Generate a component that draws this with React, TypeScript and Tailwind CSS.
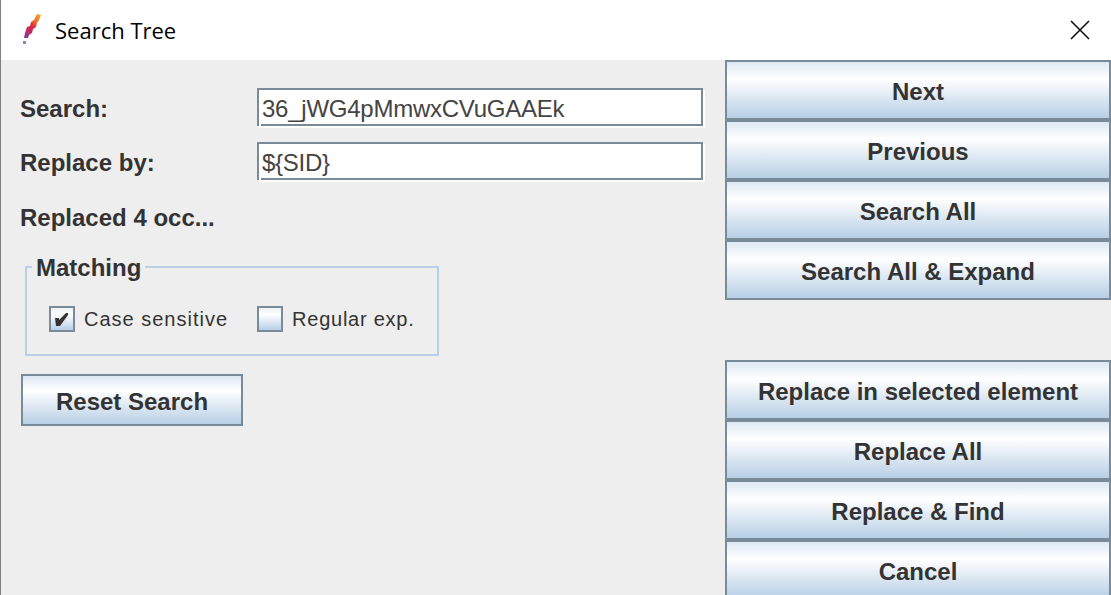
const FONT = "font-['Liberation_Sans',Arial,sans-serif]";

function FeatherIcon() {
  return (
    <svg width="22" height="32" viewBox="0 0 22 32" className="shrink-0">
      <defs>
        <linearGradient id="feather" x1="0.8" y1="0" x2="0.2" y2="1">
          <stop offset="0" stopColor="#f5a02a" />
          <stop offset="0.3" stopColor="#ee6a2c" />
          <stop offset="0.5" stopColor="#dc2b42" />
          <stop offset="0.72" stopColor="#c42a5c" />
          <stop offset="1" stopColor="#8c3a96" />
        </linearGradient>
      </defs>
      <path d="M15 0 L19 1 L17 6 L15 9 L14 13 L11 15 L10 19 L7 21 L6 24 L2 24 L3 19 L5 13 L8 12 L9 8 L12 6 Z" fill="url(#feather)" />
      <rect x="1" y="27" width="3" height="3" fill="#a678c0" />
    </svg>
  );
}

function MetalButton({ label, className = "" }: { label: string; className?: string }) {
  return (
    <button
      className={`flex items-center justify-center border-2 border-[#7a8a99] bg-gradient-to-b from-[#dde8f3] via-white via-30% to-[#b8cfe5] pt-[4px] text-[24px] font-bold text-[#333333] ${className}`}
    >
      {label}
    </button>
  );
}

function Field({ label, value }: { label: string; value: string }) {
  return (
    <div className="flex h-[38px] items-center">
      <span className="w-[237px] pt-[3px] text-[24px] font-bold text-[#333333]">{label}</span>
      <div className="relative flex h-[38px] w-[446px] items-center border-2 border-[#7a8a99] bg-white pl-[3px] pt-[3px] text-[24px] tracking-[-0.25px] text-[#444444] shadow-[2px_2px_0_#ffffff]">
        {value}
        <span className="absolute -bottom-[2px] left-0 h-[2px] w-[2px] bg-white" />
      </div>
    </div>
  );
}

function Check({ label, checked, textClass }: { label: string; checked?: boolean; textClass: string }) {
  return (
    <div className="flex items-center gap-[9px]">
      <span className="flex h-[26px] w-[26px] items-center justify-center border-2 border-[#7a8a99] bg-gradient-to-b from-[#eef3f8] via-white via-30% to-[#b8cfe5]">
        {checked && (
          <svg width="16" height="16" viewBox="0 0 16 16">
            <path d="M1 7 H5 V9 L12 2 H14 V4 L6 15 H2 Z" fill="#333333" />
          </svg>
        )}
      </span>
      <span className={`text-[20px] text-[#333333] ${textClass}`}>{label}</span>
    </div>
  );
}

export default function App() {
  const searchButtons = ["Next", "Previous", "Search All", "Search All & Expand"];
  const replaceButtons = ["Replace in selected element", "Replace All", "Replace & Find", "Cancel"];

  return (
    <div className={`flex h-[595px] w-[1111px] flex-col overflow-hidden border-l border-[#808080] bg-[#eeeeee] ${FONT}`}>
      {/* title bar */}
      <div className="flex h-[60px] shrink-0 items-center bg-white pl-[21px] pr-[21px]">
        <FeatherIcon />
        <span className="ml-[11px] font-['Open_Sans',sans-serif] text-[22px] text-black">Search Tree</span>
        <svg width="20" height="20" viewBox="0 0 20 20" className="ml-auto">
          <path d="M1 1 L19 19 M19 1 L1 19" stroke="#111111" strokeWidth="1.6" />
        </svg>
      </div>

      <div className="flex min-h-0 flex-1">
        {/* left form */}
        <div className="flex w-[724px] flex-col pl-[19px] pt-[28px]">
          <div className="flex flex-col gap-[16px]">
            <Field label="Search:" value="36_jWG4pMmwxCVuGAAEk" />
            <Field label="Replace by:" value="${SID}" />
          </div>
          <div className="mt-[24px] text-[24px] font-bold leading-[28px] text-[#333333]">Replaced 4 occ...</div>

          <fieldset className="ml-[5px] mt-[20px] h-[104px] w-[414px] border-2 border-[#b8cfe5] pl-[22px] pt-[22px]">
            <legend className="-ml-[17px] px-[4px] pt-[2px] text-[24px] font-bold leading-[28px] text-[#333333]">Matching</legend>
            <div className="flex gap-[29px]">
              <Check label="Case sensitive" checked textClass="tracking-[1px]" />
              <Check label="Regular exp." textClass="tracking-[0.75px]" />
            </div>
          </fieldset>

          <MetalButton label="Reset Search" className="ml-[1px] mt-[18px] h-[52px] w-[222px]" />
        </div>

        {/* right button stacks */}
        <div className="flex flex-1 flex-col gap-[60px]">
          <div className="flex flex-col">
            {searchButtons.map((b) => (
              <MetalButton key={b} label={b} className="h-[60px] w-full" />
            ))}
          </div>
          <div className="flex flex-col">
            {replaceButtons.map((b) => (
              <MetalButton key={b} label={b} className="h-[60px] w-full" />
            ))}
          </div>
        </div>
      </div>
    </div>
  );
}
